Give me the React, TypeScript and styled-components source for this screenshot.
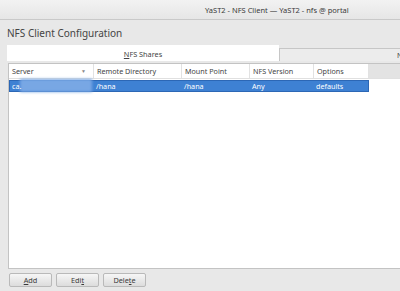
import React from 'react'
import styled, { createGlobalStyle } from 'styled-components'

const GlobalStyle = createGlobalStyle`
  html, body {
    margin: 0;
    padding: 0;
    background: #e8e8e8;
    overflow: hidden;
  }
  body {
    font-family: "Noto Sans", "Open Sans", sans-serif;
    color: #333;
  }
`

const Window = styled.div`
  width: 400px;
  height: 291px;
  overflow: hidden;
  display: flex;
  flex-direction: column;
  background: #e8e8e8;
`
const TitleBar = styled.div`
  height: 19px;
  flex: none;
  display: flex;
  align-items: center;
  padding-left: 205px;
  background: linear-gradient(to bottom, #f2f2f2, #e6e6e6);
  border-bottom: 1px solid #c9c9c9;
  font-size: 7.5px;
  color: #3a3a3a;
  white-space: nowrap;
`
const Heading = styled.div`
  padding: 6px 0 0 7px;
  height: 18px;
  font-size: 10px;
  color: #444;
  white-space: nowrap;
`
const TabRow = styled.div`
  display: flex;
  align-items: flex-end;
  padding-left: 7px;
  height: 17px;
  white-space: nowrap;
`
const Tab = styled.div<{ $active?: boolean }>`
  flex: none;
  width: 272px;
  height: ${p => (p.$active ? '16px' : '13px')};
  display: flex;
  align-items: center;
  justify-content: ${p => (p.$active ? 'center' : 'flex-start')};
  padding-left: ${p => (p.$active ? '0' : '117px')};
  box-sizing: border-box;
  background: ${p => (p.$active ? '#ffffff' : '#ececec')};
  border: 1px solid ${p => (p.$active ? '#ffffff' : '#c6c6c6')};
  border-bottom: none;
  font-size: 7.3px;
  color: #444;
`
const Mnemonic = styled.span`
  text-decoration: underline;
`
const TablePanel = styled.div`
  margin: 2px 0 0 8px;
  width: 420px;
  height: 206px;
  flex: none;
  background: #ffffff;
  border: 1px solid #c3c3c3;
  box-sizing: border-box;
  display: flex;
  flex-direction: column;
`
const HeaderRow = styled.div`
  display: flex;
  height: 14px;
  background: #e3e3e3;
  border-bottom: 1px solid #e0e0e0;
`
const HeaderCell = styled.div<{ $w: number }>`
  width: ${p => p.$w}px;
  flex: none;
  box-sizing: border-box;
  background: #ffffff;
  border-right: 1px solid #e2e2e2;
  padding-left: 3px;
  display: flex;
  align-items: center;
  justify-content: space-between;
  font-size: 7.2px;
  color: #444;
  white-space: nowrap;
`
const SortArrow = styled.span`
  font-size: 5px;
  color: #888;
  margin-right: 7px;
`
const Row = styled.div`
  margin-top: 1px;
  display: flex;
  height: 12px;
  width: 360px;
  box-sizing: border-box;
  background: #3e81d3;
  border: 1px solid #2c67b5;
`
const Cell = styled.div<{ $w: number }>`
  width: ${p => p.$w}px;
  flex: none;
  box-sizing: border-box;
  padding-left: 2px;
  display: flex;
  align-items: center;
  font-size: 7.2px;
  color: #ffffff;
  white-space: nowrap;
  position: relative;
`
const Redacted = styled.span`
  position: absolute;
  left: 10px;
  top: -2px;
  width: 72px;
  height: 13px;
  background: #78a7e4;
  filter: blur(1.5px);
`
const ButtonRow = styled.div`
  display: flex;
  gap: 4px;
  padding: 4px 0 0 9px;
`
const Button = styled.div`
  width: 43px;
  height: 14px;
  box-sizing: border-box;
  display: flex;
  align-items: center;
  justify-content: center;
  background: linear-gradient(to bottom, #f6f6f6, #dcdcdc);
  border: 1px solid #b9b9b9;
  border-radius: 2px;
  font-size: 7.3px;
  color: #3a3a3a;
`

const columns = [
  { title: 'Server', w: 85, value: 'ca.' },
  { title: 'Remote Directory', w: 88, value: '/hana' },
  { title: 'Mount Point', w: 68, value: '/hana' },
  { title: 'NFS Version', w: 64, value: 'Any' },
  { title: 'Options', w: 55, value: 'defaults' },
]

export default function App() {
  return (
    <>
      <GlobalStyle />
      <Window>
        <TitleBar>YaST2 - NFS Client — YaST2 - nfs @ portal</TitleBar>
        <Heading>NFS Client Configuration</Heading>
        <TabRow>
          <Tab $active>
            <span><Mnemonic>N</Mnemonic>FS Shares</span>
          </Tab>
          <Tab>NFS Settings</Tab>
        </TabRow>
        <TablePanel>
          <HeaderRow>
            {columns.map((c, i) => (
              <HeaderCell key={c.title} $w={c.w}>
                {c.title}
                {i === 0 && <SortArrow>▼</SortArrow>}
              </HeaderCell>
            ))}
          </HeaderRow>
          <Row>
            {columns.map((c, i) => (
              <Cell key={c.title} $w={i === 0 ? c.w - 1 : c.w}>
                {i === 0 && <Redacted />}
                <span style={{ position: 'relative' }}>{c.value}</span>
              </Cell>
            ))}
          </Row>
        </TablePanel>
        <ButtonRow>
          <Button><Mnemonic>A</Mnemonic>dd</Button>
          <Button>Edi<Mnemonic>t</Mnemonic></Button>
          <Button>Dele<Mnemonic>t</Mnemonic>e</Button>
        </ButtonRow>
      </Window>
    </>
  )
}
